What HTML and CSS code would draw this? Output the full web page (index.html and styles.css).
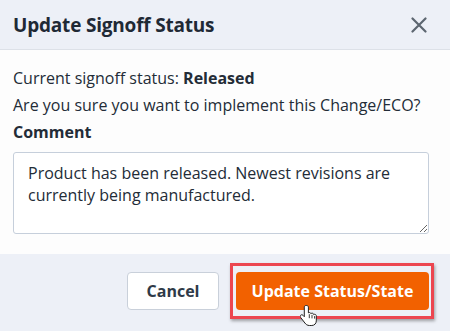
FILE: index.html
```html
<!DOCTYPE html>
<html>
<head>
<meta charset="utf-8">
<link rel="stylesheet" href="styles.css">
</head>
<body>
<div class="dialog">
  <div class="header">
    <h1 class="title">Update Signoff Status</h1>
    <button class="close" aria-label="Close">
      <svg width="16" height="16" viewBox="0 0 16 16"><path d="M1.5 1.5 L14.5 14.5 M14.5 1.5 L1.5 14.5" stroke="#5d6670" stroke-width="2.2" stroke-linecap="round" fill="none"/></svg>
    </button>
  </div>
  <div class="body">
    <p class="line">Current signoff status: <b>Released</b></p>
    <p class="line">Are you sure you want to implement this Change/ECO?</p>
    <label class="line label">Comment</label>
    <textarea class="comment">Product has been released. Newest revisions are currently being manufactured.</textarea>
  </div>
  <div class="footer">
    <button class="btn cancel">Cancel</button>
    <div class="highlight">
      <button class="btn primary">Update Status/State</button>
      <svg class="cursor" width="18" height="24" viewBox="0 0 18 24"><path d="M6 1.5c-1 0-1.7.7-1.7 1.6v9.6l-1.3-1.4c-.7-.7-1.8-.7-2.4 0-.6.6-.5 1.5 0 2.1l4.3 5.6c1 1.4 2.4 2.5 4.5 2.5h2.4c2.6 0 4.5-2 4.5-4.6v-5c0-.9-.7-1.6-1.6-1.6-.4 0-.7.1-1 .4 0-.9-.7-1.5-1.6-1.5-.5 0-.9.2-1.2.5-.2-.7-.8-1.2-1.5-1.2-.4 0-.8.1-1 .4V3.1c0-.9-.8-1.6-1.7-1.6z" fill="#fff" stroke="#222" stroke-width="1"/><path d="M9.3 10.2v4 M12 10.9v3.5 M14.6 12.1v2.5" stroke="#222" stroke-width=".9" fill="none"/></svg>
    </div>
  </div>
</div>
</body>
</html>
```

FILE: styles.css
```css
* { box-sizing: border-box; }
html, body { margin: 0; padding: 0; }
body {
  width: 450px;
  height: 331px;
  overflow: hidden;
  background: #fdfdfd;
  font-family: "Open Sans", "Noto Sans", sans-serif;
  color: #232c37;
}
.dialog {
  width: 450px;
  height: 331px;
  display: flex;
  flex-direction: column;
}
.header {
  height: 50px;
  flex: none;
  background: #edf0f7;
  border-bottom: 1px solid #dde1e8;
  display: flex;
  align-items: center;
  justify-content: space-between;
  padding: 0 23px 0 13px;
}
.title {
  margin: 0;
  font-size: 19px;
  font-weight: 700;
  color: #1f2935;
  letter-spacing: -0.2px;
}
.close {
  border: 0;
  background: none;
  padding: 0;
  width: 16px;
  height: 16px;
  display: flex;
}
.body {
  flex: none;
  padding: 15px 13px 0 13px;
  display: flex;
  flex-direction: column;
  height: 204px;
}
.line {
  margin: 0;
  font-size: 16px;
  line-height: 27px;
  display: block;
}
.label { font-weight: 700; }
.comment {
  margin-top: 6px;
  width: 416px;
  height: 82px;
  border: 1px solid #c6cfdb;
  border-radius: 3px;
  padding: 9px 14px;
  font-family: inherit;
  font-size: 16px;
  line-height: 22px;
  color: #232c37;
  background: #fff;
  resize: vertical;
}
.footer {
  flex: 1;
  background: #edf0f7;
  display: flex;
  justify-content: flex-end;
  align-items: flex-start;
  gap: 17px;
  padding: 18px 21px 0 0;
}
.btn {
  height: 38px;
  border-radius: 4px;
  font-family: inherit;
  font-size: 16px;
  font-weight: 700;
  padding: 0;
}
.cancel {
  width: 92px;
  background: #fff;
  border: 1px solid #c9d0da;
  color: #2f3a48;
}
.highlight {
  position: relative;
}
.highlight::before {
  content: "";
  position: absolute;
  left: -6px;
  right: -5px;
  top: -9px;
  bottom: -9px;
  border: 3px solid #ec4650;
  box-shadow: 1px 2px 3px rgba(0,0,0,0.35);
  pointer-events: none;
}
.primary {
  position: relative;
  width: 193px;
  background: #f26100;
  border: 0;
  color: #fff;
}
.cursor {
  position: absolute;
  left: 64px;
  top: 32px;
}
```
